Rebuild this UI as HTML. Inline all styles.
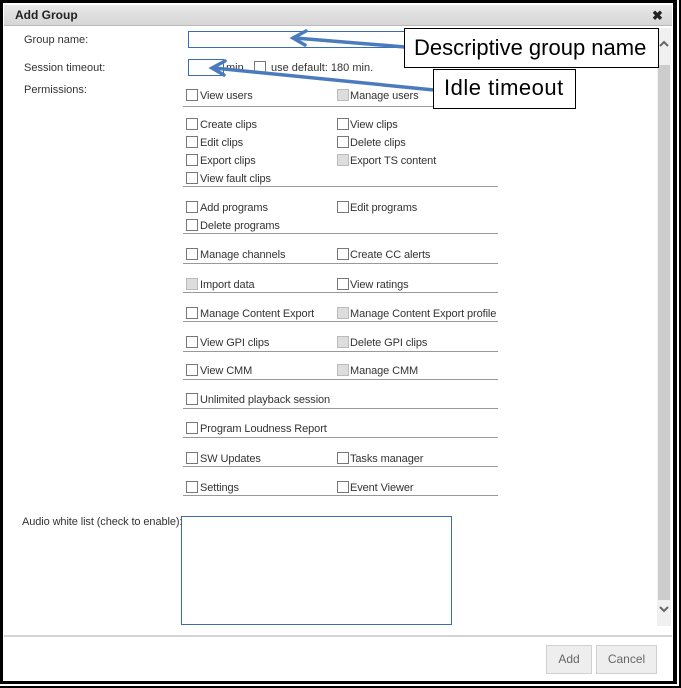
<!DOCTYPE html>
<html><head><style>
*{margin:0;padding:0;box-sizing:border-box}
body{width:681px;height:688px;background:#fff;position:relative;overflow:hidden;font-family:"Liberation Sans",Arial,sans-serif;font-size:11px;color:#333}
.a{position:absolute}
.cb{position:absolute;width:12px;height:12px;border:1px solid #777;background:#fff}
.cb.d{background:#ddd;border-color:#bbb}
.l{position:absolute;white-space:nowrap;line-height:13px}
.sep{position:absolute;left:183px;width:315px;height:1px;background:#999}
</style></head><body>
<div class="a" style="left:0;top:0;width:677px;height:684px;border:3px solid #000;border-right-width:4px"></div>
<div class="a" style="left:0;top:686px;width:681px;height:2px;background:#000"></div>
<div class="a" style="left:679px;top:0;width:2px;height:688px;background:#000"></div>
<div class="a" style="left:4px;top:5px;width:668px;height:21px;background:linear-gradient(#e8e8e8,#d6d6d6);border-bottom:1px solid #bbb"></div>
<div class="l" style="left:15px;top:9px;font-weight:bold;font-size:12px;color:#222">Add Group</div>
<div class="l" style="left:652px;top:9px;font-weight:bold;font-size:13px;color:#222">✖</div>
<div class="a" style="left:657px;top:28px;width:14px;height:598px;background:#f0f0f0"></div>
<div class="a" style="left:658px;top:65px;width:12px;height:535px;background:#cdcdcd"></div>
<svg class="a" style="left:657px;top:38px" width="14" height="12"><polyline points="3,8 7,4 11,8" stroke="#666" stroke-width="2" fill="none"/></svg>
<svg class="a" style="left:657px;top:603px" width="14" height="12"><polyline points="3,4 7,8 11,4" stroke="#666" stroke-width="2" fill="none"/></svg>
<div class="a" style="left:4px;top:635px;width:668px;height:2px;background:#d4d4d4"></div>
<div class="a" style="left:546px;top:645px;width:46px;height:29px;background:#eee;border:1px solid #d0d0d0;color:#666;font-size:12px;text-align:center;line-height:27px">Add</div>
<div class="a" style="left:596px;top:645px;width:61px;height:29px;background:#eee;border:1px solid #d0d0d0;color:#666;font-size:12px;text-align:center;line-height:27px">Cancel</div>

<div class="l" style="left:24px;top:34px">Group name:</div>
<div class="l" style="left:24px;top:62px">Session timeout:</div>
<div class="l" style="left:24px;top:84px">Permissions:</div>
<div class="a" style="left:188px;top:31px;width:232px;height:17px;border:1px solid #3a6db0"></div>
<div class="a" style="left:188px;top:59px;width:36px;height:17px;border:1px solid #3a6db0"></div>
<div class="l" style="left:226px;top:62px">min</div>
<div class="cb" style="left:254px;top:61px"></div>
<div class="l" style="left:271px;top:62px">use default: 180 min.</div>

<div id="perm"></div>
<div class="l" style="left:22px;top:516px;letter-spacing:-0.1px">Audio white list (check to enable):</div>
<div class="a" style="left:181px;top:516px;width:271px;height:109px;border:1px solid #3a6db0"></div>

<svg class="a" style="left:0;top:0" width="681" height="688">
<g stroke="#4a7bbd" stroke-width="3.5" fill="none" stroke-linecap="round">
<line x1="405" y1="47" x2="295" y2="38"/><polyline points="306,31 293,38 305,45"/>
<line x1="434" y1="90" x2="214" y2="68"/><polyline points="225,61 212,68 224,75"/>
</g></svg>
<div class="a" style="left:404px;top:28px;width:255px;height:40px;background:#fff;border:1px solid #000"></div>
<div class="l" style="left:414px;top:36px;font-size:22px;line-height:24px;color:#000">Descriptive group name</div>
<div class="a" style="left:433px;top:69px;width:143px;height:40px;background:#fff;border:1px solid #000"></div>
<div class="l" style="left:444px;top:76px;font-size:22px;line-height:24px;letter-spacing:0.5px;color:#000">Idle timeout</div>

<script>
var rows=[[95,"View users",0,"Manage users",1],["s",106],
[124,"Create clips",0,"View clips",0],[142,"Edit clips",0,"Delete clips",0],[160,"Export clips",0,"Export TS content",1],[178,"View fault clips",0],["s",186],
[207,"Add programs",0,"Edit programs",0],[225,"Delete programs",0],["s",233],
[254,"Manage channels",0,"Create CC alerts",0],["s",263],
[284,"Import data",1,"View ratings",0],["s",292],
[313,"Manage Content Export",0,"Manage Content Export profile",1],["s",321],
[342,"View GPI clips",0,"Delete GPI clips",1],["s",351],
[370,"View CMM",0,"Manage CMM",1],["s",379],
[399,"Unlimited playback session",0],["s",408],
[428,"Program Loudness Report",0],["s",437],
[458,"SW Updates",0,"Tasks manager",0],["s",466],
[487,"Settings",0,"Event Viewer",0],["s",495]];
var h="";
rows.forEach(function(r){
if(r[0]=="s"){h+='<div class="sep" style="top:'+r[1]+'px"></div>';return;}
var y=r[0];
h+='<div class="cb'+(r[2]?' d':'')+'" style="left:186px;top:'+(y-6)+'px"></div><div class="l" style="left:200px;top:'+(y-5)+'px;letter-spacing:-0.1px">'+r[1]+'</div>';
if(r[3])h+='<div class="cb'+(r[4]?' d':'')+'" style="left:337px;top:'+(y-6)+'px"></div><div class="l" style="left:350px;top:'+(y-5)+'px;letter-spacing:-0.1px">'+r[3]+'</div>';
});
document.getElementById("perm").innerHTML=h;
</script>
</body></html>
